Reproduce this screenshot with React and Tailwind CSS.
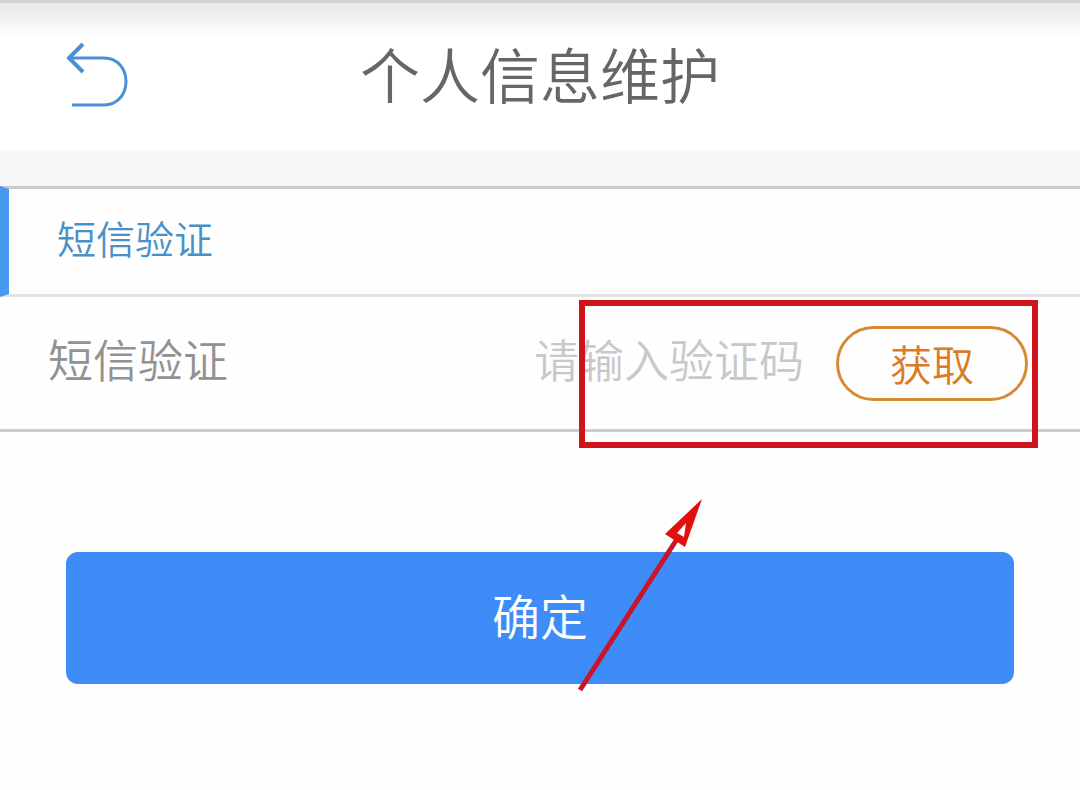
function BackIcon() {
  return (
    <svg viewBox="0 0 68 68" className="size-17" fill="none" stroke="#4a90d9" strokeWidth="3" aria-hidden="true">
      <path d="M6 19H40C53 19 62 29 62 42.5S53 66 40 66H8" />
      <path d="M19 5L5 19L19 33" strokeWidth="4" />
    </svg>
  );
}

function PointerArrow() {
  return (
    <svg viewBox="0 0 130 200" className="pointer-events-none absolute top-16 left-[576px] h-[200px] w-[130px]" aria-hidden="true">
      <path d="M4 194L101 43" stroke="#c8152c" strokeWidth="5" fill="none" />
      <path fillRule="evenodd" fill="#e0100f" d="M126 3L89 38L109 51ZM110 27L101 37L108 41Z" />
    </svg>
  );
}

export default function App() {
  return (
    <div className="min-h-screen bg-[#fefefe] font-['Noto_Sans_CJK_SC','Noto_Sans',sans-serif] font-[350]">
      <header className="grid h-[150px] grid-cols-[1fr_auto_1fr] items-center border-t-3 border-[#d3d3d3] bg-linear-to-b from-[#e8e8e8] to-white to-[36px] px-16 pb-2">
        <button type="button" aria-label="返回" className="justify-self-start">
          <BackIcon />
        </button>
        <h1 className="text-[60px] leading-[72px] font-[350] text-[#666666]">个人信息维护</h1>
      </header>

      <main>
        <form onSubmit={(event) => event.preventDefault()}>
          <div className="h-9 bg-[#f7f7f7]" />
          <h2 className="border-y-3 border-l-9 border-t-[#cbc9ca] border-b-[#e2e2e2] border-l-[#4798ef] bg-[#fefefe] pt-5 pb-7 pl-12 text-[39px] leading-[57px] font-[350] text-[#4a90c8]">
            短信验证
          </h2>

          <div className="relative flex h-[135px] items-center border-b-3 border-[#cccccc] pr-[52px] pl-12">
            <label htmlFor="code" className="pb-2 text-[45px] leading-[60px] text-[#929292]">
              短信验证
            </label>
            <input
              id="code"
              type="text"
              inputMode="numeric"
              placeholder="请输入验证码"
              className="min-w-0 flex-1 bg-transparent pb-2 text-right text-[45px] leading-[60px] text-[#666666] outline-none placeholder:text-[#c8c8c8]"
            />
            <button
              type="button"
              className="ml-8 h-[75px] w-48 rounded-full border-3 border-[#d68a35] text-[42px] leading-[60px] text-[#d97c24]"
            >
              获取
            </button>
            <div className="pointer-events-none absolute top-[3px] right-[42px] h-[148px] w-[459px] border-6 border-[#cf141b]" />
          </div>

          <div className="relative px-[66px] pt-[120px]">
            <button
              type="submit"
              className="h-[132px] w-full rounded-xl bg-[#3e8cf7] pb-2 text-[48px] leading-[60px] text-white"
            >
              确定
            </button>
            <PointerArrow />
          </div>
        </form>
      </main>
    </div>
  );
}
